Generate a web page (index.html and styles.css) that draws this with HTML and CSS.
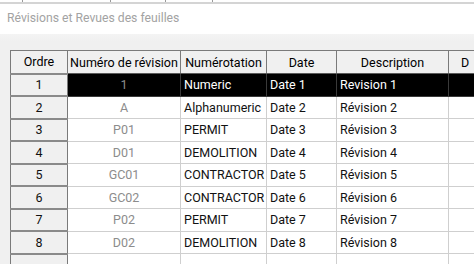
FILE: index.html
```html
<!DOCTYPE html>
<html lang="fr">
<head>
<meta charset="utf-8">
<link rel="stylesheet" href="styles.css">
</head>
<body>
<div class="topstrip">
  <span class="tick t1"></span><span class="tick t2"></span><span class="tick t3"></span><span class="tick t4"></span>
</div>
<div class="titlebar">Révisions et Revues des feuilles</div>
<div class="panel">
  <table class="grid">
    <colgroup>
      <col class="c-ord"><col class="c-num"><col class="c-nt"><col class="c-date"><col class="c-desc"><col class="c-extra">
    </colgroup>
    <thead>
      <tr><th>Ordre</th><th>Numéro de révision</th><th>Numérotation</th><th>Date</th><th>Description</th><th class="cut">D</th></tr>
    </thead>
    <tbody>
      <tr class="sel"><th>1</th><td class="num">1</td><td>Numeric</td><td>Date 1</td><td>Revision 1</td><td></td></tr>
      <tr><th>2</th><td class="num">A</td><td>Alphanumeric</td><td>Date 2</td><td>Révision 2</td><td></td></tr>
      <tr><th>3</th><td class="num">P01</td><td>PERMIT</td><td>Date 3</td><td>Révision 3</td><td></td></tr>
      <tr><th>4</th><td class="num">D01</td><td>DEMOLITION</td><td>Date 4</td><td>Révision 4</td><td></td></tr>
      <tr><th>5</th><td class="num">GC01</td><td>CONTRACTOR</td><td>Date 5</td><td>Révision 5</td><td></td></tr>
      <tr><th>6</th><td class="num">GC02</td><td>CONTRACTOR</td><td>Date 6</td><td>Révision 6</td><td></td></tr>
      <tr><th>7</th><td class="num">P02</td><td>PERMIT</td><td>Date 7</td><td>Révision 7</td><td></td></tr>
      <tr><th>8</th><td class="num">D02</td><td>DEMOLITION</td><td>Date 8</td><td>Révision 8</td><td></td></tr>
      <tr class="empty"><th></th><td></td><td></td><td></td><td></td><td></td></tr>
    </tbody>
  </table>
</div>
</body>
</html>
```
FILE: styles.css
```css
html, body {
  margin: 0;
  padding: 0;
  width: 474px;
  height: 264px;
  overflow: hidden;
  background: #f0f0f0;
  font-family: Roboto, "Noto Sans", sans-serif;
}
.topstrip {
  position: relative;
  height: 4px;
  background: #ffffff;
  box-sizing: border-box;
  border-bottom: 2px solid #d4d4d4;
}
.tick {
  position: absolute;
  top: 0;
  width: 1px;
  height: 2px;
  background: #9a9a9a;
}
.t1 { left: 22px; }
.t2 { left: 110px; }
.t3 { left: 165px; }
.t4 { left: 212px; }
.titlebar {
  height: 30px;
  background: #ffffff;
  color: #a3a3a3;
  font-size: 12.2px;
  line-height: 28px;
  padding-left: 7px;
}
.panel {
  padding: 16px 0 0 10px;
  background: linear-gradient(#f4f4f4, #f0f0f0 8px);
}
.grid {
  border-collapse: collapse;
  table-layout: fixed;
  width: 500px;
  font-size: 12.5px;
  background: #ffffff;
}
.c-ord { width: 57px; }
.c-num { width: 113px; }
.c-nt { width: 86px; }
.c-date { width: 70px; }
.c-desc { width: 112px; }
.c-extra { width: 62px; }
.grid th, .grid td {
  height: 22.5px;
  padding: 0 3px;
  box-sizing: border-box;
  white-space: nowrap;
  overflow: hidden;
}
.grid thead th {
  height: 23px;
  padding: 0 1px;
  background: #f0f0f0;
  font-weight: normal;
  color: #000;
  border: 1px solid #7a7a7a;
  border-bottom: 1px solid #5a5a5a;
  text-align: center;
}
.grid thead th.cut {
  text-align: left;
  padding-left: 12px;
}
.grid tbody th {
  background: #f0f0f0;
  font-weight: normal;
  color: #111;
  text-align: center;
  border: 1px solid #7a7a7a;
  border-top: 2px solid #8a8a8a;
}
.grid tbody td {
  border: 1px solid #cfcfcf;
  color: #111;
  text-align: left;
}
.grid tbody td.num {
  text-align: center;
  color: #8c8c8c;
}
.grid tr.sel td {
  background: #000000;
  color: #ffffff;
  border-color: #3a3a3a;
}
.grid tr.sel td.num {
  color: #8c8c8c;
}
```
